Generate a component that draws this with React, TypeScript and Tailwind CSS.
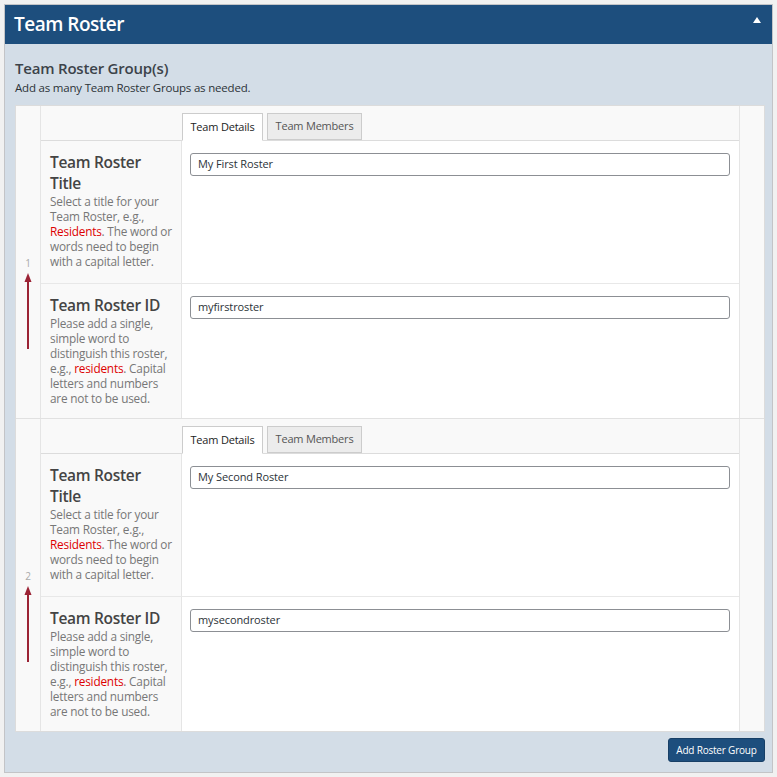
import React from 'react';

const font = { fontFamily: '"Open Sans", "Noto Sans", sans-serif' };

interface Group {
  index: number;
  title: string;
  id: string;
}

const groups: Group[] = [
  { index: 1, title: 'My First Roster', id: 'myfirstroster' },
  { index: 2, title: 'My Second Roster', id: 'mysecondroster' },
];

const Arrow: React.FC = () => (
  <svg width="8" height="76" viewBox="0 0 8 76" className="block">
    <polygon points="4,0 0.5,9 7.5,9" fill="#9b2335" />
    <rect x="3" y="8" width="2" height="68" fill="#9b2335" />
  </svg>
);

const FieldRow: React.FC<{
  heading: React.ReactNode;
  children: React.ReactNode;
  value: string;
  height: string;
  last?: boolean;
}> = ({ heading, children, value, height, last }) => (
  <div className={`flex ${height} ${last ? '' : 'border-b border-[#e8e8e8]'}`}>
    <div className="w-[141px] shrink-0 bg-[#f9f9f9] border-r border-[#e5e5e5] pl-[9px] pr-[2px] pt-[11px]">
      <div className="text-[15.5px] leading-[21px] font-semibold text-[#444] tracking-[-0.3px]">{heading}</div>
      <div className="text-[11.8px] leading-[15px] text-[#777] tracking-[-0.2px] whitespace-nowrap">{children}</div>
    </div>
    <div className="flex-1 bg-white pl-[8px] pr-[9px] pt-[12px]">
      <div className="h-[23px] border border-[#8c8f94] rounded-[3px] bg-white px-[7px] flex items-center text-[11px] text-[#2c3338] tracking-[-0.1px]">
        {value}
      </div>
    </div>
  </div>
);

const RosterGroup: React.FC<{ group: Group; first: boolean }> = ({ group, first }) => (
  <div className={`flex ${first ? '' : 'border-t border-[#e1e1e1]'}`}>
    <div className="w-[25px] shrink-0 bg-[#f9f9f9] border-r border-[#e5e5e5] flex flex-col items-center pt-[150px]">
      <span className="text-[10px] leading-[14px] text-[#aaa]">{group.index}</span>
      <div className="mt-[3px]">
        <Arrow />
      </div>
    </div>
    <div className="flex-1">
      <div className="h-[35px] bg-[#f9f9f9] border-b border-[#dcdcdc] flex items-end pl-[141px]">
        <div className="h-[28px] -mb-px w-[81px] bg-white border border-[#ccc] border-b-white text-[11px] text-[#222] tracking-[-0.2px] flex items-center justify-center">
          Team Details
        </div>
        <div className="h-[27px] ml-[4px] w-[95px] bg-[#ececec] border border-[#ccc] text-[11px] text-[#555] tracking-[-0.2px] flex items-center justify-center">
          Team Members
        </div>
      </div>
      <FieldRow
        height="h-[143px]"
        value={group.title}
        heading={
          <>
            Team Roster
            <br />
            Title
          </>
        }
      >
        Select a title for your
        <br />
        Team Roster, e.g.,
        <br />
        <span className="text-[#d00]">Residents</span>. The word or
        <br />
        words need to begin
        <br />
        with a capital letter.
      </FieldRow>
      <FieldRow height="h-[134px]" value={group.id} heading="Team Roster ID" last>
        Please add a single,
        <br />
        simple word to
        <br />
        distinguish this roster,
        <br />
        e.g., <span className="text-[#d00]">residents</span>. Capital
        <br />
        letters and numbers
        <br />
        are not to be used.
      </FieldRow>
    </div>
    <div className="w-[25px] shrink-0 bg-[#f9f9f9] border-l border-[#e5e5e5]" />
  </div>
);

export default function App() {
  return (
    <div className="min-h-[777px] bg-[#f1f1f1] pt-[4px] pl-[4px]" style={font}>
      <div className="w-[769px] border border-[#c3c4c7] bg-[#d3dde7]">
        <div className="h-[39px] bg-[#1d4e7d] flex items-center justify-between pl-[9px] pr-[11px]">
          <h1 className="text-[19px] font-semibold text-white tracking-[-0.5px]">Team Roster</h1>
          <svg width="8" height="6" viewBox="0 0 8 6" className="-mt-[10px]">
            <polygon points="4,0 0,6 8,6" fill="#fff" />
          </svg>
        </div>
        <div className="pl-[10px] pr-[7px] pt-[13px] pb-[10px]">
          <h2 className="text-[15px] leading-[22px] font-semibold text-[#3c434a] tracking-[-0.2px]">
            Team Roster Group(s)
          </h2>
          <p className="text-[11.5px] leading-[18px] text-[#2c3338] tracking-[-0.2px]">
            Add as many Team Roster Groups as needed.
          </p>
          <div className="mt-[8px] border border-[#dcdcdc] bg-white">
            {groups.map((g, i) => (
              <RosterGroup key={g.index} group={g} first={i === 0} />
            ))}
          </div>
          <div className="flex justify-end mt-[6px]">
            <button className="h-[24px] w-[97px] bg-[#1d4e7d] border border-[#173f66] rounded-[3px] text-[10px] text-white tracking-[-0.2px]">
              Add Roster Group
            </button>
          </div>
        </div>
      </div>
    </div>
  );
}
